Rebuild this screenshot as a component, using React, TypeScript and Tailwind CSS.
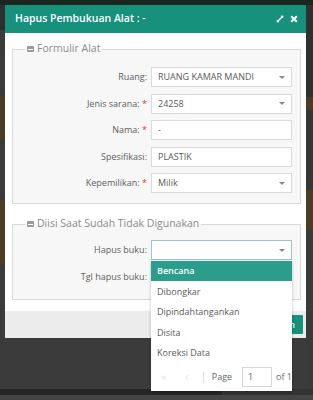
import { ChevronsLeft, ChevronLeft } from "lucide-react";

const font = "font-['Open_Sans',sans-serif]";

function Caret() {
  return (
    <span className="ml-auto mr-[6px] h-0 w-0 border-x-[3px] border-t-[3px] border-x-transparent border-t-[#8a8a8a]" />
  );
}

function Row(props: any) {
  const { label, value, required, select, focus } = props;
  return (
    <div className="flex h-[20px] items-center">
      <div className="w-[134px] pr-0 text-right text-[9px] text-[#606060]">
        {label}:{required && <span className="text-[#e33]"> *</span>}
      </div>
      <div
        className={`ml-[4px] flex h-[20px] w-[141px] items-center border bg-white pl-[6px] text-[9px] text-[#5a5a5a] ${
          focus ? "border-[#9fc1d3]" : "border-[#dadada]"
        }`}
      >
        <span>{value}</span>
        {select && <Caret />}
      </div>
    </div>
  );
}

function Legend(props: any) {
  return (
    <legend className="ml-[12px] flex h-[14px] items-center gap-[3px] px-[2px] text-[10.5px] text-[#8a8a8a]">
      <span className="flex h-[6px] w-[7px] items-center justify-center rounded-[1px] bg-[#9a9a9a]">
        <span className="h-[1px] w-[5px] bg-white" />
      </span>
      {props.children}
    </legend>
  );
}

function Background() {
  return (
    <div className="flex h-[400px] w-[313px] flex-col bg-[#3b3b3b]">
      <div className="h-[5px] bg-[#1c2621]" />
      <div className="flex h-[384px]">
        <div className="flex w-[5px] flex-col">
          <div className="h-[25px] bg-[#2e2e2e]" />
          <div className="h-[67px] bg-[#3b3b3b]" />
          <div className="h-[43px] bg-[#4a3b24]" />
          <div className="h-[60px] bg-[#3b3b3b]" />
          <div className="h-[63px] bg-[#4b3c22]" />
          <div className="flex-1 bg-[#3b3b3b]" />
        </div>
        <div className="flex-1" />
        <div className="flex w-[7px] flex-col">
          <div className="h-[92px] bg-[#2f3130]" />
          <div className="h-[13px] bg-[#4a3b24]" />
          <div className="h-[80px] bg-[#363636]" />
          <div className="h-[40px] bg-[#4b3c22]" />
          <div className="flex-1 bg-[#3a3a3a]" />
        </div>
      </div>
      <div className="flex h-[6px]">
        <div className="w-[222px] bg-[#262626]" />
        <div className="flex-1 bg-[#333]" />
      </div>
      <div className="flex-1 bg-[#454545]" />
    </div>
  );
}

export default function App() {
  const items = ["Dibongkar", "Dipindahtangankan", "Disita", "Koreksi Data"];
  return (
    <div className={`relative h-[400px] w-[313px] overflow-hidden ${font}`}>
      <Background />

      {/* modal window */}
      <div className="absolute left-[5px] top-[5px] flex h-[333px] w-[301px] flex-col bg-white">
        <div className="flex h-[28px] items-center bg-[#16917c] pl-[10px] pr-[8px]">
          <span className="text-[10.5px] font-semibold text-white">Hapus Pembukuan Alat : -</span>
          <div className="ml-auto flex items-center gap-[6px] text-white">
            <svg width="8" height="8" viewBox="0 0 8 8">
              <path d="M1 7 L7 1" stroke="white" strokeWidth="1.4" />
              <path d="M4.5 0.8 H7.2 V3.5 Z" fill="white" />
              <path d="M0.8 4.5 V7.2 H3.5 Z" fill="white" />
            </svg>
            <svg width="8" height="8" viewBox="0 0 8 8">
              <path d="M1.2 1.2 L6.8 6.8 M6.8 1.2 L1.2 6.8" stroke="white" strokeWidth="2" />
            </svg>
          </div>
        </div>

        <div className="flex flex-1 flex-col pl-[7px] pr-[5px] pt-[9px]">
          <fieldset className="h-[162px] border border-[#d9d9d9] bg-[#f7f7f7]">
            <Legend>Formulir Alat</Legend>
            <div className="flex flex-col gap-[6.5px] pt-[11px]">
              <Row label="Ruang" value="RUANG KAMAR MANDI" select />
              <Row label="Jenis sarana" value="24258" required select />
              <Row label="Nama" value="-" required />
              <Row label="Spesifikasi" value="PLASTIK" />
              <Row label="Kepemilikan" value="Milik" required select />
            </div>
          </fieldset>

          <fieldset className="mt-[13px] h-[83px] border border-[#d9d9d9] bg-[#f7f7f7]">
            <Legend>Diisi Saat Sudah Tidak Digunakan</Legend>
            <div className="flex flex-col gap-[6.5px] pt-[9px]">
              <Row label="Hapus buku" value="" select focus />
              <Row label="Tgl hapus buku" value="" />
            </div>
          </fieldset>
        </div>

        <div className="flex h-[27px] items-center justify-end bg-[#ececec] pr-[3px]">
          <button className="h-[19px] rounded-[1px] bg-[#16917c] px-[8px] text-[9px] font-semibold text-white">
            Simpan
          </button>
        </div>
      </div>

      {/* open combo list */}
      <div className="absolute left-[151px] top-[261px] flex h-[130px] w-[141px] flex-col overflow-hidden bg-white text-[9px] text-[#5a5a5a] shadow-[0_1px_3px_rgba(0,0,0,0.25)]">
        <div className="flex h-[20px] items-center bg-[#2a9d8c] pl-[6px] font-semibold text-white">
          Bencana
        </div>
        {items.map((x) => (
          <div key={x} className="flex h-[20.5px] items-center pl-[6px]">
            {x}
          </div>
        ))}
        <div className="mt-[3px] flex h-[22px] items-center whitespace-nowrap">
          <ChevronsLeft size={11} className="ml-[9px] text-[#b5b5b5]" strokeWidth={1.6} />
          <ChevronLeft size={11} className="ml-[15px] text-[#b5b5b5]" strokeWidth={1.6} />
          <span className="ml-[13px] h-[11px] w-px bg-[#dcdcdc]" />
          <span className="ml-[8px] text-[#666]">Page</span>
          <div className="ml-[10px] flex h-[20px] w-[30px] shrink-0 items-center border border-[#d6d6d6] pl-[5px]">
            1
          </div>
          <span className="ml-[4px] text-[#666]">of 1</span>
        </div>
      </div>
    </div>
  );
}
